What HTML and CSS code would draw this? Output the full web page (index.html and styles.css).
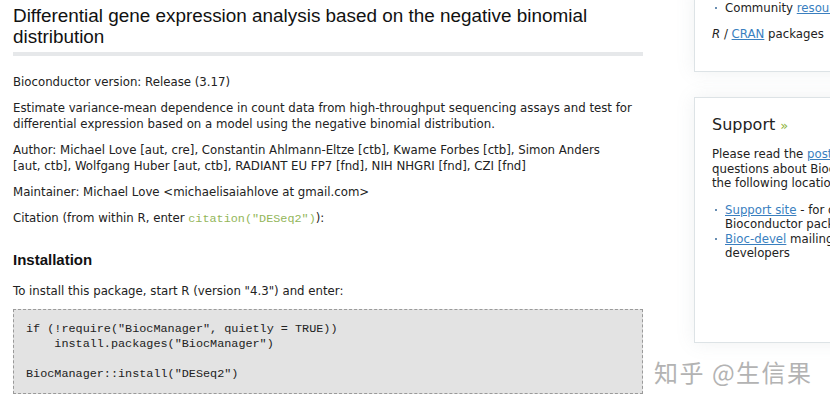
FILE: index.html
```html
<!DOCTYPE html>
<html>
<head>
<meta charset="utf-8">
<link rel="stylesheet" href="styles.css">
</head>
<body>
<div class="page">
  <main class="main">
    <h1 class="title">Differential gene expression analysis based on the negative binomial distribution</h1>
    <p>Bioconductor version: Release (3.17)</p>
    <p>Estimate variance-mean dependence in count data from high-throughput sequencing assays and test for differential expression based on a model using the negative binomial distribution.</p>
    <p>Author: Michael Love [aut, cre], Constantin Ahlmann-Eltze [ctb], Kwame Forbes [ctb], Simon Anders [aut,&nbsp;ctb], Wolfgang Huber [aut, ctb], RADIANT EU FP7 [fnd], NIH NHGRI [fnd], CZI [fnd]</p>
    <p>Maintainer: Michael Love &lt;michaelisaiahlove at gmail.com&gt;</p>
    <p>Citation (from within R, enter <code class="inline">citation("DESeq2")</code>):</p>
    <h2 class="section">Installation</h2>
    <p>To install this package, start R (version "4.3") and enter:</p>
    <pre class="codeblock">if (!require("BiocManager", quietly = TRUE))
    install.packages("BiocManager")

BiocManager::install("DESeq2")</pre>
  </main>
  <aside class="sidebar">
    <div class="box box-top">
      <ul class="list">
        <li>Community <a href="#">resources</a></li>
      </ul>
      <p class="cran"><em>R</em> / <a href="#">CRAN</a> packages</p>
    </div>
    <div class="box box-support">
      <h3 class="box-title">Support <span class="raquo">»</span></h3>
      <p>Please read the <a href="#">posting guide</a>. Post questions about Bioconductor to one of the following locations:</p>
      <ul class="list list-support">
        <li><a href="#">Support site</a> - for questions about Bioconductor packages</li>
        <li><a href="#">Bioc-devel</a> mailing list - for developers</li>
      </ul>
    </div>
    <div class="watermark">知乎 @生信果</div>
  </aside>
</div>
</body>
</html>
```
FILE: styles.css
```css
html, body {
  margin: 0;
  padding: 0;
  background: #fff;
}
body {
  font-family: "DejaVu Sans", Verdana, sans-serif;
  font-size: 11.75px;
  color: #222;
  overflow: hidden;
  width: 830px;
  height: 401px;
}
.page {
  display: flex;
  align-items: flex-start;
  width: 830px;
}
.main {
  width: 630px;
  padding-left: 13px;
  flex: none;
}
.main p {
  margin: 0 0 10px 0;
  line-height: 16px;
  max-width: 624px;
}
.title {
  font-family: "Liberation Sans", Arial, sans-serif;
  font-weight: normal;
  font-size: 18.9px;
  line-height: 21px;
  color: #111;
  margin: 5px 0 0 0;
  padding-bottom: 5px;
  border-bottom: 4px solid #e6e8ea;
}
.main .title + p {
  margin-top: 18px;
}
.inline {
  font-family: "Liberation Mono", monospace;
  font-size: 11.8px;
  color: #93b65a;
}
.section {
  font-family: "Liberation Sans", Arial, sans-serif;
  font-size: 15px;
  font-weight: bold;
  color: #111;
  margin: 24px 0 15px 0;
}
.codeblock {
  font-family: "Liberation Mono", monospace;
  font-size: 11.8px;
  line-height: 15px;
  color: #222;
  background: #e3e3e3;
  border: 1px dashed #9a9a9a;
  margin: 10px 0 0 0;
  padding: 12px 12px 11px 12px;
}
.sidebar {
  margin-left: 51px;
  width: 278px;
  flex: none;
  margin-top: -10px;
}
.box {
  background: #fff;
  border: 1px solid #dde3e6;
  box-shadow: 0 0 18px rgba(120, 140, 150, 0.12);
  padding: 10px 17px;
}
.box-top {
  height: 82px;
  box-sizing: border-box;
}
.box-top .list { margin: 0; }
.cran {
  margin: 11px 0 0 0;
  line-height: 14.5px;
}
.box-support {
  margin-top: 25px;
  height: 246px;
  box-sizing: border-box;
  padding-top: 17px;
}
.box-title {
  font-family: "DejaVu Sans", Verdana, sans-serif;
  font-weight: normal;
  font-size: 16px;
  line-height: 19px;
  color: #222;
  margin: 0 0 12px 0;
}
.raquo {
  color: #8db33b;
  font-size: 13px;
}
.box-support p {
  margin: 0 0 12px 0;
  line-height: 14.5px;
}
.list {
  list-style: none;
  margin: 0;
  padding: 0 0 0 13px;
  line-height: 14.5px;
}
.list-support {
  padding-right: 14px;
}
.list li {
  position: relative;
}
.list li::before {
  content: "";
  position: absolute;
  left: -10px;
  top: 6px;
  width: 2px;
  height: 2px;
  background: #6a8fb3;
}
a {
  color: #3a7fbf;
  text-decoration: underline;
}
.watermark {
  position: absolute;
  left: 654px;
  top: 354px;
  font-family: "Noto Sans CJK SC", sans-serif;
  font-size: 24px;
  color: #b3b3b3;
  letter-spacing: 1.5px;
}
```
